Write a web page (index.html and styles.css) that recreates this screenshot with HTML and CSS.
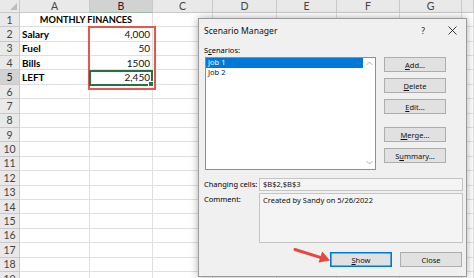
FILE: index.html
```html
<!DOCTYPE html>
<html>
<head>
<meta charset="utf-8">
<link rel="stylesheet" href="styles.css">
</head>
<body>
<div class="sheet">
  <div class="row head"><span class="corner"><i class="tri"></i></span><span>A</span><span class="selh">B</span><span>C</span><span>D</span><span>E</span><span>F</span><span>G</span><span></span></div>
  <div class="row"><span class="rh">1</span><span class="merge b">MONTHLY FINANCES</span><span></span><span></span><span></span><span></span><span></span><span></span></div>
  <div class="row"><span class="rh">2</span><span class="b lab">Salary</span><span class="num">4,000</span><span></span><span></span><span></span><span></span><span></span><span></span></div>
  <div class="row"><span class="rh">3</span><span class="b lab">Fuel</span><span class="num">50</span><span></span><span></span><span></span><span></span><span></span><span></span></div>
  <div class="row"><span class="rh">4</span><span class="b lab">Bills</span><span class="num">1500</span><span></span><span></span><span></span><span></span><span></span><span></span></div>
  <div class="row"><span class="rh selr">5</span><span class="b lab">LEFT</span><span class="num">2,450</span><span></span><span></span><span></span><span></span><span></span><span></span></div>
  <div class="row"><span class="rh">6</span><span></span><span></span><span></span><span></span><span></span><span></span><span></span><span></span></div>
  <div class="row"><span class="rh">7</span><span></span><span></span><span></span><span></span><span></span><span></span><span></span><span></span></div>
  <div class="row"><span class="rh">8</span><span></span><span></span><span></span><span></span><span></span><span></span><span></span><span></span></div>
  <div class="row"><span class="rh">9</span><span></span><span></span><span></span><span></span><span></span><span></span><span></span><span></span></div>
  <div class="row"><span class="rh">10</span><span></span><span></span><span></span><span></span><span></span><span></span><span></span><span></span></div>
  <div class="row"><span class="rh">11</span><span></span><span></span><span></span><span></span><span></span><span></span><span></span><span></span></div>
  <div class="row"><span class="rh">12</span><span></span><span></span><span></span><span></span><span></span><span></span><span></span><span></span></div>
  <div class="row"><span class="rh">13</span><span></span><span></span><span></span><span></span><span></span><span></span><span></span><span></span></div>
  <div class="row"><span class="rh">14</span><span></span><span></span><span></span><span></span><span></span><span></span><span></span><span></span></div>
  <div class="row"><span class="rh">15</span><span></span><span></span><span></span><span></span><span></span><span></span><span></span><span></span></div>
  <div class="row"><span class="rh">16</span><span></span><span></span><span></span><span></span><span></span><span></span><span></span><span></span></div>
  <div class="row"><span class="rh">17</span><span></span><span></span><span></span><span></span><span></span><span></span><span></span><span></span></div>
  <div class="row"><span class="rh">18</span><span></span><span></span><span></span><span></span><span></span><span></span><span></span><span></span></div>
  <div class="row"><span class="rh">19</span><span></span><span></span><span></span><span></span><span></span><span></span><span></span><span></span></div>
</div>

<div class="redbox"></div>
<div class="cellsel"><i class="handle"></i></div>

<div class="dialog">
  <div class="titlebar">
    <span class="title">Scenario Manager</span>
    <span class="help">?</span>
    <svg class="close-x" width="9" height="9" viewBox="0 0 9 9"><path d="M0.5 0.5 L8.5 8.5 M8.5 0.5 L0.5 8.5" stroke="#222" stroke-width="0.9" fill="none"/></svg>
  </div>
  <div class="dbody">
    <div class="label lbl-scen">S<u>c</u>enarios:</div>
    <div class="main">
      <div class="listbox">
        <div class="items">
          <div class="item sel">Job 1</div>
          <div class="item">Job 2</div>
        </div>
        <div class="scroll">
          <svg width="7" height="5" viewBox="0 0 7 5"><path d="M0.5 4 L3.5 1 L6.5 4" stroke="#a6a6a6" stroke-width="0.9" fill="none"/></svg>
          <svg width="7" height="5" viewBox="0 0 7 5"><path d="M0.5 1 L3.5 4 L6.5 1" stroke="#a6a6a6" stroke-width="0.9" fill="none"/></svg>
        </div>
      </div>
      <div class="btncol">
        <div class="btn"><u>A</u>dd...</div>
        <div class="btn"><u>D</u>elete</div>
        <div class="btn"><u>E</u>dit...</div>
        <div class="btn gap"><u>M</u>erge...</div>
        <div class="btn">S<u>u</u>mmary...</div>
      </div>
    </div>
    <div class="field">
      <div class="flabel">Changing cells:</div>
      <div class="fbox cc">$B$2,$B$3</div>
    </div>
    <div class="field comment">
      <div class="flabel">Comment:</div>
      <div class="fbox cm">Created by Sandy on 5/26/2022</div>
    </div>
    <div class="actions">
      <div class="btn default"><u>S</u>how</div>
      <div class="btn">Close</div>
    </div>
  </div>
</div>

<svg class="arrow" width="474" height="278" viewBox="0 0 474 278">
  <line x1="295" y1="249.5" x2="321" y2="257.6" stroke="#e8473d" stroke-width="3" stroke-linecap="round"/>
  <polygon points="330,260.6 318.6,262.6 322.2,251.6" fill="#e8473d"/>
</svg>
</body>
</html>
```
FILE: styles.css
```css
html, body {
  margin: 0;
  padding: 0;
  background: #ffffff;
  overflow: hidden;
  width: 474px;
  height: 278px;
}
body {
  position: relative;
  font-family: Lato, "Noto Sans", sans-serif;
  font-size: 10px;
  color: #111;
}
.sheet {
  display: flex;
  flex-direction: column;
}
.row {
  display: grid;
  grid-template-columns: 20px 70px 63px 60px 64px 60px 63px 62px 12px;
  height: 14.4px;
  flex: none;
}
.row > span {
  box-sizing: border-box;
  border-right: 1px solid #e0e0e0;
  border-bottom: 1px solid #e0e0e0;
  display: flex;
  align-items: center;
  overflow: hidden;
  white-space: nowrap;
}
.head {
  height: 12.9px;
}
.head > span {
  background: #e9e9e9;
  border-color: #c9c9c9;
  justify-content: center;
  color: #444;
  font-size: 10.5px;
}
.head > span.selh {
  background: #d2d2d2;
  color: #222;
  border-bottom: 1px solid #9fb8a7;
}
.corner {
  position: relative;
}
.tri {
  position: absolute;
  right: 2px;
  bottom: 2px;
  width: 0;
  height: 0;
  border-left: 7px solid transparent;
  border-bottom: 7px solid #bdbdbd;
}
.row > span.rh {
  background: #e9e9e9;
  border-color: #c9c9c9;
  justify-content: center;
  color: #444;
  font-size: 10.5px;
}
.row > span.selr {
  background: #d2d2d2;
  color: #222;
}
.merge {
  grid-column: span 2;
  justify-content: center;
}
.b {
  font-weight: 700;
  color: #000;
}
.merge.b {
  font-size: 9.2px;
}
.lab {
  padding-left: 2px;
}
.num {
  justify-content: flex-end;
  padding-right: 2px;
  color: #111;
}
.redbox {
  position: absolute;
  left: 88px;
  top: 26px;
  width: 68px;
  height: 64px;
  box-sizing: border-box;
  border: 2px solid #e5564c;
}
.cellsel {
  position: absolute;
  left: 89px;
  top: 69.5px;
  width: 64px;
  height: 16px;
  box-sizing: border-box;
  border: 2px solid #217346;
}
.handle {
  position: absolute;
  right: -3px;
  bottom: -3px;
  width: 4px;
  height: 4px;
  background: #217346;
  border: 1px solid #fff;
}

/* dialog */
.dialog {
  position: absolute;
  left: 198px;
  top: 18px;
  width: 269px;
  height: 259px;
  box-sizing: border-box;
  background: #f0f0f0;
  border: 1px solid #9a9a9a;
  box-shadow: 0 0 8px rgba(0, 0, 0, 0.32);
  font-family: "Noto Sans", sans-serif;
  font-size: 7.5px;
  color: #000;
  display: flex;
  flex-direction: column;
  white-space: nowrap;
}
.titlebar {
  height: 23px;
  display: flex;
  align-items: center;
  padding-left: 5px;
  flex: none;
}
.title {
  font-size: 8.6px;
  color: #111;
  flex: 1;
}
.help {
  font-size: 8.5px;
  color: #222;
  margin-right: 23px;
}
.close-x {
  margin-right: 9px;
}
.dbody {
  padding: 0 3px 0 5px;
  display: flex;
  flex-direction: column;
}
.lbl-scen {
  height: 10px;
  line-height: 10px;
  margin-top: 3px;
}
.main {
  display: flex;
  margin-top: 2px;
  height: 113px;
}
.listbox {
  margin-left: 1px;
  width: 171px;
  height: 113px;
  box-sizing: border-box;
  background: #fff;
  border: 1px solid #8e8e8e;
  display: flex;
}
.items {
  flex: 1;
  display: flex;
  flex-direction: column;
}
.item {
  height: 9.5px;
  line-height: 9.5px;
  padding-left: 2px;
  color: #111;
}
.item.sel {
  background: #0078d7;
  color: #fff;
}
.scroll {
  width: 12px;
  display: flex;
  flex-direction: column;
  justify-content: space-between;
  align-items: center;
  padding: 3px 0 4px;
  background: #fff;
}
.btncol {
  margin-left: 8px;
  display: flex;
  flex-direction: column;
  gap: 6px;
}
.btn {
  width: 62px;
  height: 15px;
  box-sizing: border-box;
  background: #e1e1e1;
  border: 1px solid #adadad;
  display: flex;
  align-items: center;
  justify-content: center;
  color: #111;
}
.btn.gap {
  margin-top: 7px;
}
.btn u, .label u {
  text-decoration-thickness: 0.6px;
  text-underline-offset: 1px;
}
.field {
  display: flex;
  margin-top: 8px;
}
.field.comment {
  margin-top: 2px;
}
.flabel {
  width: 55px;
  flex: none;
  line-height: 13px;
  white-space: nowrap;
}
.fbox {
  width: 204px;
  box-sizing: border-box;
  border: 1px solid #c4c4c4;
  background: #f4f4f4;
  padding-left: 3px;
  color: #111;
}
.fbox.cc {
  height: 13px;
  line-height: 11px;
}
.fbox.cm {
  height: 50px;
  line-height: 10px;
  padding-top: 1px;
}
.actions {
  display: flex;
  justify-content: flex-end;
  gap: 8px;
  margin-top: 9px;
  padding-right: 1px;
}
.btn.default {
  border: 1px solid #0078d7;
  box-shadow: inset 0 0 0 0.6px #0078d7;
}
.arrow {
  position: absolute;
  left: 0;
  top: 0;
  pointer-events: none;
}
```
